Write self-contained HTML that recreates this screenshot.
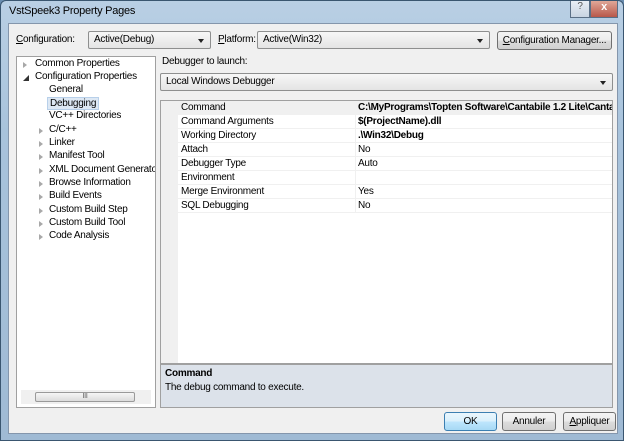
<!DOCTYPE html>
<html><head><meta charset="utf-8"><style>
*{box-sizing:border-box;margin:0;padding:0}
body{width:624px;height:441px;overflow:hidden;font-family:"Liberation Sans",sans-serif;font-size:10px;letter-spacing:-0.25px;color:#000;background:#6a8db0;white-space:nowrap}
.frame{position:absolute;left:0;top:0;width:624px;height:441px;background:linear-gradient(180deg,#b9cfe4 0%,#a8c3dc 30%,#9fbad4 100%);border:1px solid #3a5670;border-radius:6px 6px 0 0}
.title{position:absolute;left:8px;top:4px;font-size:11px}
.cap{position:absolute;top:0;height:17px;border:1px solid #5a6f86;border-top:none}
.client{position:absolute;left:7px;top:22px;width:610px;height:411px;background:#f0f0f0;border:1px solid #8496ac}
.abs{position:absolute}
.combo{position:absolute;height:18px;background:linear-gradient(#f7f7f7,#e4e4e4);border:1px solid #8e8f8f;border-radius:2px;padding:2px 5px;overflow:hidden}
.combo:after{content:"";position:absolute;right:6px;top:7px;border:3px solid transparent;border-top:4px solid #222;border-bottom:none}
.btn{position:absolute;height:19px;background:linear-gradient(#f4f4f4 0%,#ebebeb 50%,#dcdcdc 51%,#d0d0d0 100%);border:1px solid #707070;border-radius:3px;text-align:center;padding-top:3px;overflow:hidden}
.tree{position:absolute;left:7px;top:32px;width:140px;height:352px;background:#fff;border:1px solid #a0a0a0;overflow:hidden}
.ti{position:absolute}
.tri{position:absolute;width:0;height:0;border:3px solid transparent;border-left:4px solid #a8a8a8}
.grid{position:absolute;left:151px;top:76px;width:453px;height:264px;background:#fff;border:1px solid #a0a0a0;overflow:hidden}
.gut{position:absolute;left:0;top:0;width:17px;height:100%;background:#f0f0f0}
.row{position:absolute;left:17px;width:435px;height:14px;border-bottom:1px solid #f0f0f0;overflow:hidden}
.row span{position:absolute;top:1px;left:3px}
.row b{position:absolute;top:1px;left:180px}
.row .v{position:absolute;top:1px;left:180px}
.sep{position:absolute;left:194px;top:0;width:1px;height:112px;background:#f0f0f0}
.desc{position:absolute;left:151px;top:340px;width:453px;height:44px;background:#dce2ea;border:1px solid #a0a0a0}
</style></head><body>
<div class="frame">
<div class="title">VstSpeek3 Property Pages</div>
<div class="cap" style="left:569px;width:20px;background:linear-gradient(#e8eef5,#c8d4e2);text-align:center;font-size:10px;color:#555">?</div>
<div class="cap" style="left:589px;width:28px;background:linear-gradient(#e0a898,#b8584a);color:#fff;text-align:center;font-weight:bold;font-size:11px">x</div>
<div class="client">
 <div class="abs" style="left:7px;top:10px"><u>C</u>onfiguration:</div>
 <div class="combo" style="left:79px;top:7px;width:123px">Active(Debug)</div>
 <div class="abs" style="left:209px;top:10px"><u>P</u>latform:</div>
 <div class="combo" style="left:248px;top:7px;width:233px">Active(Win32)</div>
 <div class="btn" style="left:488px;top:7px;width:115px"><u>C</u>onfiguration Manager...</div>

 <div class="tree">
  <div class="tri" style="left:6px;top:5px"></div><div class="ti" style="left:18px;top:1px">Common Properties</div>
  <div class="abs" style="left:6px;top:18px;width:0;height:0;border:3px solid transparent;border-right:3px solid #333;border-bottom:3px solid #333"></div>
  <div class="ti" style="left:18px;top:14px">Configuration Properties</div>
  <div class="ti" style="left:32px;top:27px">General</div>
  <div class="ti" style="left:30px;top:40px;background:#dde8f4;border:1px solid #b8d0ea;padding:0 2px;line-height:11px">Debugging</div>
  <div class="ti" style="left:32px;top:53px">VC++ Directories</div>
  <div class="tri" style="left:22px;top:71px"></div><div class="ti" style="left:32px;top:67px">C/C++</div>
  <div class="tri" style="left:22px;top:84px"></div><div class="ti" style="left:32px;top:80px">Linker</div>
  <div class="tri" style="left:22px;top:97px"></div><div class="ti" style="left:32px;top:93px">Manifest Tool</div>
  <div class="tri" style="left:22px;top:111px"></div><div class="ti" style="left:32px;top:107px">XML Document Generator</div>
  <div class="tri" style="left:22px;top:124px"></div><div class="ti" style="left:32px;top:120px">Browse Information</div>
  <div class="tri" style="left:22px;top:137px"></div><div class="ti" style="left:32px;top:133px">Build Events</div>
  <div class="tri" style="left:22px;top:151px"></div><div class="ti" style="left:32px;top:147px">Custom Build Step</div>
  <div class="tri" style="left:22px;top:164px"></div><div class="ti" style="left:32px;top:160px">Custom Build Tool</div>
  <div class="tri" style="left:22px;top:177px"></div><div class="ti" style="left:32px;top:173px">Code Analysis</div>
  <div class="abs" style="left:4px;top:333px;width:130px;height:14px;background:#f0f0f0">
   <div class="abs" style="left:14px;top:2px;width:100px;height:10px;background:linear-gradient(#f6f6f6,#dcdcdc);border:1px solid #9a9a9a;border-radius:2px;font-size:7px;text-align:center;color:#555">III</div>
  </div>
 </div>

 <div class="abs" style="left:153px;top:32px">Debugger to launch:</div>
 <div class="combo" style="left:151px;top:49px;width:453px">Local Windows Debugger</div>

 <div class="grid">
  <div class="gut"></div>
  <div class="row" style="top:0;background:#f0f0f0"><span>Command</span><b>C:\MyPrograms\Topten Software\Cantabile 1.2 Lite\Cantabile1</b></div>
  <div class="row" style="top:14px"><span>Command Arguments</span><b>$(ProjectName).dll</b></div>
  <div class="row" style="top:28px"><span>Working Directory</span><b>.\Win32\Debug</b></div>
  <div class="row" style="top:42px"><span>Attach</span><span class="v">No</span></div>
  <div class="row" style="top:56px"><span>Debugger Type</span><span class="v">Auto</span></div>
  <div class="row" style="top:70px"><span>Environment</span></div>
  <div class="row" style="top:84px"><span>Merge Environment</span><span class="v">Yes</span></div>
  <div class="row" style="top:98px"><span>SQL Debugging</span><span class="v">No</span></div>
  <div class="sep"></div>
 </div>
 <div class="desc">
  <div class="abs" style="left:4px;top:3px;font-weight:bold">Command</div>
  <div class="abs" style="left:4px;top:17px">The debug command to execute.</div>
 </div>

 <div class="btn" style="left:435px;top:388px;width:53px;border-color:#3c7fb1;background:linear-gradient(#eaf6fd 0%,#d9f0fc 50%,#bee6fd 51%,#a7d9f5 100%)">OK</div>
 <div class="btn" style="left:493px;top:388px;width:54px">Annuler</div>
 <div class="btn" style="left:554px;top:388px;width:53px"><u>A</u>ppliquer</div>
</div>
</div>
</body></html>
